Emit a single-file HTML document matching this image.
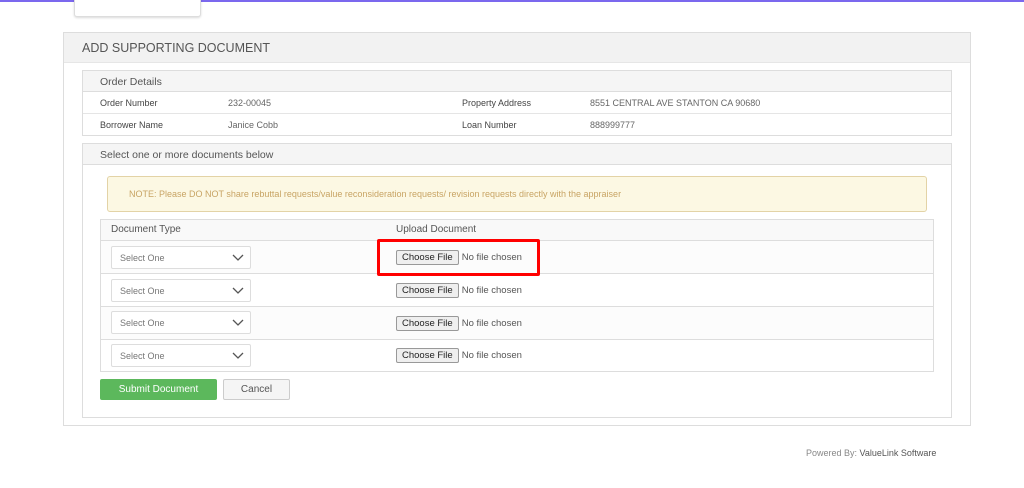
<!DOCTYPE html>
<html><head><style>
*{box-sizing:border-box;margin:0;padding:0}
body{width:1024px;height:488px;background:#fff;font-family:"Liberation Sans",Arial,sans-serif;position:relative;overflow:hidden;color:#555}
.a{position:absolute}
.t{font-size:9px;color:#444;white-space:nowrap}
.sel{position:absolute;left:111px;width:140px;height:23px;border:1px solid #ddd;border-radius:2px;background:#fff;font-size:9px;color:#777;padding:6px 0 0 8px}
.sel svg{position:absolute;right:6px;top:7px}
.cf{position:absolute;left:396px;font-size:9.5px;color:#555;white-space:nowrap}
.cf span.b{display:inline-block;border:1px solid #999;background:#efefef;color:#222;border-radius:2px;padding:1px 5px;margin-right:3px}
.row{position:absolute;left:101px;width:832px;border-top:1px solid #ddd}
</style></head><body>
<div class="a" style="left:0;top:0;width:1024px;height:2px;background:#7b68ee"></div>
<div class="a" style="left:74px;top:-2px;width:127px;height:19px;background:#fff;border:1px solid #ddd;border-radius:0 0 3px 3px;box-shadow:0 1px 2px rgba(0,0,0,.15)"></div>

<div class="a" style="left:63px;top:32px;width:908px;height:394px;border:1px solid #ddd;background:#fff"></div>
<div class="a" style="left:64px;top:33px;width:906px;height:30px;background:#f2f2f2;border-bottom:1px solid #e6e6e6"></div>
<div class="a" style="left:82px;top:41px;font-size:12.5px;color:#555">ADD SUPPORTING DOCUMENT</div>

<div class="a" style="left:82px;top:70px;width:870px;height:66px;border:1px solid #ddd"></div>
<div class="a" style="left:83px;top:71px;width:868px;height:21px;background:#f5f5f5;border-bottom:1px solid #ddd"></div>
<div class="a" style="left:100px;top:76px;font-size:10.5px;color:#555">Order Details</div>
<div class="a" style="left:83px;top:113px;width:868px;height:1px;background:#e5e5e5"></div>
<div class="a t" style="left:100px;top:98px">Order Number</div>
<div class="a t" style="left:228px;top:98px;color:#666">232-00045</div>
<div class="a t" style="left:462px;top:98px">Property Address</div>
<div class="a t" style="left:590px;top:98px;color:#666">8551 CENTRAL AVE STANTON CA 90680</div>
<div class="a t" style="left:100px;top:120px">Borrower Name</div>
<div class="a t" style="left:228px;top:120px;color:#666">Janice Cobb</div>
<div class="a t" style="left:462px;top:120px">Loan Number</div>
<div class="a t" style="left:590px;top:120px;color:#666">888999777</div>

<div class="a" style="left:82px;top:143px;width:870px;height:275px;border:1px solid #ddd"></div>
<div class="a" style="left:83px;top:144px;width:868px;height:21px;background:#f5f5f5;border-bottom:1px solid #ddd"></div>
<div class="a" style="left:100px;top:149px;font-size:10.5px;color:#555">Select one or more documents below</div>

<div class="a" style="left:107px;top:176px;width:820px;height:36px;background:#fcf8e3;border:1px solid #e3d3a6;border-radius:3px"></div>
<div class="a t" style="left:129px;top:189px;color:#c8a464">NOTE: Please DO NOT share rebuttal requests/value reconsideration requests/ revision requests directly with the appraiser</div>

<div class="a" style="left:100px;top:219px;width:834px;height:153px;border:1px solid #ddd"></div>
<div class="a" style="left:101px;top:220px;width:832px;height:20px;background:#f9f9f9"></div>
<div class="a" style="left:111px;top:224px;font-size:10px;color:#555">Document Type</div>
<div class="a" style="left:396px;top:224px;font-size:10px;color:#555">Upload Document</div>
<div class="row" style="top:240px;height:33px;background:#fcfcfc"></div>
<div class="row" style="top:273px;height:33px"></div>
<div class="row" style="top:306px;height:33px;background:#fcfcfc"></div>
<div class="row" style="top:339px;height:32px"></div>

<div class="sel" style="top:246px">Select One<svg width="12" height="8" viewBox="0 0 12 8"><path d="M1 1l5 5 5-5" fill="none" stroke="#555" stroke-width="1.3"/></svg></div>
<div class="sel" style="top:279px">Select One<svg width="12" height="8" viewBox="0 0 12 8"><path d="M1 1l5 5 5-5" fill="none" stroke="#555" stroke-width="1.3"/></svg></div>
<div class="sel" style="top:311px">Select One<svg width="12" height="8" viewBox="0 0 12 8"><path d="M1 1l5 5 5-5" fill="none" stroke="#555" stroke-width="1.3"/></svg></div>
<div class="sel" style="top:344px">Select One<svg width="12" height="8" viewBox="0 0 12 8"><path d="M1 1l5 5 5-5" fill="none" stroke="#555" stroke-width="1.3"/></svg></div>

<div class="cf" style="top:250px"><span class="b">Choose File</span>No file chosen</div>
<div class="cf" style="top:283px"><span class="b">Choose File</span>No file chosen</div>
<div class="cf" style="top:316px"><span class="b">Choose File</span>No file chosen</div>
<div class="cf" style="top:348px"><span class="b">Choose File</span>No file chosen</div>
<div class="a" style="left:377px;top:239px;width:163px;height:37px;border:3px solid #f00;border-radius:2px"></div>

<div class="a" style="left:100px;top:379px;width:117px;height:21px;background:#5cb85c;border-radius:2px;color:#fff;font-size:10px;text-align:center;line-height:21px">Submit Document</div>
<div class="a" style="left:223px;top:379px;width:67px;height:21px;background:#f5f5f5;border:1px solid #ccc;border-radius:2px;color:#555;font-size:10px;text-align:center;line-height:19px">Cancel</div>

<div class="a" style="left:806px;top:448px;font-size:9px;color:#888">Powered By: <span style="color:#555">ValueLink Software</span></div>
</body></html>
